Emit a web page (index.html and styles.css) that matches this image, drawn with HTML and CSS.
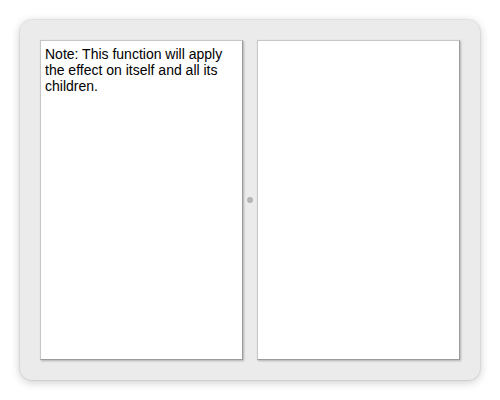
FILE: index.html
```html
<!DOCTYPE html>
<html>
<head>
<meta charset="utf-8">
<link rel="stylesheet" href="styles.css">
</head>
<body>
<div class="window">
  <div class="pane">
    <p class="note">Note: This function will apply the effect on itself and all its children.</p>
  </div>
  <div class="splitter"><span class="grip"></span></div>
  <div class="pane"></div>
</div>
</body>
</html>
```
FILE: styles.css
```css
html, body {
  margin: 0;
  padding: 0;
  background: #ffffff;
}
body {
  padding: 20px;
  font-family: "Liberation Sans", Arial, sans-serif;
}
.window {
  width: 460px;
  height: 360px;
  box-sizing: border-box;
  padding: 20px;
  background: #ebebeb;
  border-radius: 12px;
  box-shadow: 0 0 0 1px rgba(0,0,0,0.06), 0 2px 10px rgba(0,0,0,0.22);
  display: flex;
}
.pane {
  flex: 1;
  background: #ffffff;
  border: 1px solid #c6c6c6;
  border-right-color: #9a9a9a;
  border-bottom-color: #9a9a9a;
  box-shadow: 1px 1px 2px rgba(0,0,0,0.25);
  padding: 5px 4px;
}
.splitter {
  width: 14px;
  display: flex;
  align-items: center;
  justify-content: center;
}
.grip {
  width: 6px;
  height: 6px;
  border-radius: 50%;
  background: #b4b4b4;
}
.note {
  margin: 0;
  font-size: 14px;
  line-height: 16px;
  color: #000000;
}
```
